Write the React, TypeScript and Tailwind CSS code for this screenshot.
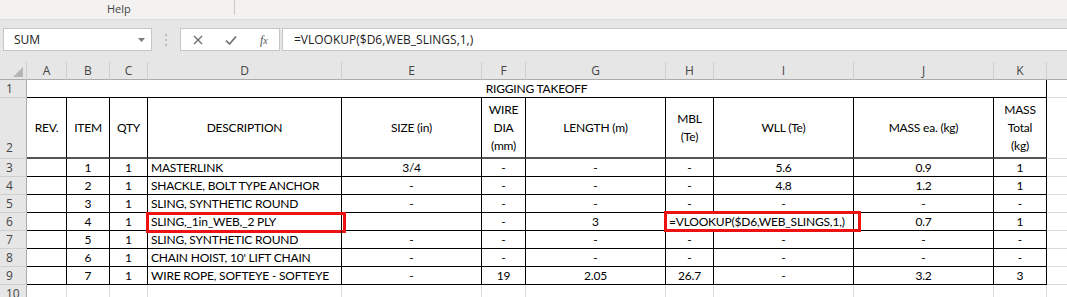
import clsx from "clsx";

const COLS = ["A", "B", "C", "D", "E", "F", "G", "H", "I", "J", "K"];

type Row = { item: string; desc: string; e: string; f: string; g: string; h: string; i: string; j: string; k: string };

const rows: Row[] = [
  { item: "1", desc: "MASTERLINK", e: "3/4", f: "-", g: "-", h: "-", i: "5.6", j: "0.9", k: "1" },
  { item: "2", desc: "SHACKLE, BOLT TYPE ANCHOR", e: "-", f: "-", g: "-", h: "-", i: "4.8", j: "1.2", k: "1" },
  { item: "3", desc: "SLING, SYNTHETIC ROUND", e: "-", f: "-", g: "-", h: "-", i: "-", j: "-", k: "-" },
  { item: "4", desc: "SLING,_1in_WEB,_2 PLY", e: "", f: "-", g: "3", h: "=VLOOKUP($D6,WEB_SLINGS,1,)", i: "", j: "0.7", k: "1" },
  { item: "5", desc: "SLING, SYNTHETIC ROUND", e: "-", f: "-", g: "-", h: "-", i: "-", j: "-", k: "-" },
  { item: "6", desc: "CHAIN HOIST, 10' LIFT CHAIN", e: "-", f: "-", g: "-", h: "-", i: "-", j: "-", k: "-" },
  { item: "7", desc: "WIRE ROPE, SOFTEYE - SOFTEYE", e: "-", f: "19", g: "2.05", h: "26.7", i: "-", j: "3.2", k: "3" },
];

const cellFont = { fontFamily: "Lato, 'Liberation Sans', sans-serif" };

function RowHead({ n, tall, last }: { n: string; tall?: boolean; last?: boolean }) {
  return (
    <div
      className={clsx(
        "flex border-r border-b border-r-[#ababab] border-b-[#d0d0d0] bg-[#e6e6e6] pl-[6px] text-[12px] text-[#444]",
        tall ? "h-[61px] items-end pb-[1px]" : "h-[18px] items-center",
        last && "border-b-0"
      )}
      style={{ fontFamily: "'Open Sans', 'Noto Sans', sans-serif" }}
    >
      {n}
    </div>
  );
}

function Cell({
  children,
  className,
  left,
}: {
  children?: React.ReactNode;
  className?: string;
  left?: boolean;
}) {
  return (
    <div
      className={clsx(
        "flex h-[18px] items-center whitespace-nowrap border-r border-b border-black text-[12px] leading-none tracking-[-0.2px] text-black",
        left ? "justify-start pl-[3px]" : "justify-center",
        className
      )}
    >
      {children}
    </div>
  );
}

function HeadCell({ lines, className }: { lines: string[]; className?: string }) {
  return (
    <div
      className={clsx(
        "flex h-[61px] flex-col items-center justify-center border-r border-b-2 border-r-black border-b-[#555] text-[12px] leading-[18px] tracking-[-0.2px] text-black",
        className
      )}
    >
      {lines.map((l) => (
        <span key={l}>{l}</span>
      ))}
    </div>
  );
}

export default function App() {
  return (
    <div className="h-[297px] w-[1067px] overflow-hidden bg-white" style={{ fontFamily: "'Open Sans', 'Noto Sans', sans-serif" }}>
      {/* ribbon tab strip */}
      <div className="flex h-[20px] items-center border-b border-[#dadada] bg-[#f3f2f1] text-[11px] text-[#444]">
        <span className="ml-[107px]">Help</span>
        <div className="ml-[103px] h-[15px] w-px self-start bg-[#c8c8c8]" />
      </div>

      {/* formula bar */}
      <div className="flex h-[42px] items-start bg-[#e6e6e6] pt-[8px]">
        <div className="ml-[3px] flex h-[23px] w-[149px] items-center justify-between border border-[#c6c6c6] bg-white pl-[10px] pr-[6px] text-[12px] text-[#222]">
          <span>SUM</span>
          <svg width="7" height="4" viewBox="0 0 7 4">
            <path d="M0 0h7L3.5 4z" fill="#7a7a7a" />
          </svg>
        </div>
        <div className="ml-[12px] flex h-[23px] w-[3px] flex-col items-center justify-center gap-[3px]">
          <span className="h-[2px] w-[2px] bg-[#bdbdbd]" />
          <span className="h-[2px] w-[2px] bg-[#bdbdbd]" />
          <span className="h-[2px] w-[2px] bg-[#bdbdbd]" />
        </div>
        <div className="ml-[13px] flex h-[23px] w-[100px] items-center border border-[#c6c6c6] bg-white">
          <svg className="ml-[12px]" width="10" height="10" viewBox="0 0 10 10">
            <path d="M1 1l8 8M9 1l-8 8" stroke="#6b6b6b" strokeWidth="1.3" />
          </svg>
          <svg className="ml-[22px]" width="12" height="10" viewBox="0 0 12 10">
            <path d="M1 5.5l3.5 3.5L11 1.5" stroke="#6b6b6b" strokeWidth="1.6" fill="none" />
          </svg>
          <span
            className="ml-[23px] text-[12px] italic text-[#555]"
            style={{ fontFamily: "'Liberation Serif', serif" }}
          >
            f<span className="text-[10px]">x</span>
          </span>
        </div>
        <div className="ml-[2px] flex h-[23px] flex-1 items-center border border-r-0 border-[#c6c6c6] bg-white pl-[11px] text-[12px] text-[#222]">
          =VLOOKUP($D6,WEB_SLINGS,1,)
        </div>
      </div>

      {/* sheet grid */}
      <div
        className="grid grid-cols-[27px_40px_43px_38px_194px_140px_44px_140px_48px_140px_140px_53px_20px]"
        style={cellFont}
      >
        {/* column headers */}
        <div className="relative h-[18px] border-r border-b border-r-[#cfcfcf] border-b-[#ababab] bg-[#e6e6e6]">
          <svg className="absolute bottom-[2px] right-[3px]" width="10" height="10" viewBox="0 0 10 10">
            <path d="M10 0V10H0z" fill="#b5b5b5" />
          </svg>
        </div>
        {COLS.map((c) => (
          <div
            key={c}
            className="flex h-[18px] items-center justify-center border-r border-b border-r-[#cfcfcf] border-b-[#ababab] bg-[#e6e6e6] text-[12px] text-[#444]"
            style={{ fontFamily: "'Open Sans', 'Noto Sans', sans-serif" }}
          >
            {c}
          </div>
        ))}
        <div className="h-[18px] border-b border-b-[#ababab] bg-[#e6e6e6]" />

        {/* row 1 */}
        <RowHead n="1" />
        <div className="col-span-11 flex h-[18px] items-center justify-center border-r border-b border-black text-[12px] tracking-[-0.2px] text-black">
          RIGGING TAKEOFF
        </div>
        <div className="h-[18px] border-b border-[#dadada]" />

        {/* row 2 */}
        <RowHead n="2" tall />
        <HeadCell lines={["REV."]} />
        <HeadCell lines={["ITEM"]} />
        <HeadCell lines={["QTY"]} />
        <HeadCell lines={["DESCRIPTION"]} />
        <HeadCell lines={["SIZE (in)"]} />
        <HeadCell lines={["WIRE", "DIA", "(mm)"]} />
        <HeadCell lines={["LENGTH (m)"]} />
        <HeadCell lines={["MBL", "(Te)"]} />
        <HeadCell lines={["WLL (Te)"]} />
        <HeadCell lines={["MASS ea. (kg)"]} />
        <HeadCell lines={["MASS", "Total", "(kg)"]} />
        <div className="h-[61px] border-b border-[#dadada]" />

        {/* data rows */}
        {rows.map((r, idx) => {
          const n = String(idx + 3);
          const flagged = r.item === "4";
          return [
            <RowHead key={`h${n}`} n={n} />,
            <Cell key={`a${n}`} />,
            <Cell key={`b${n}`}>{r.item}</Cell>,
            <Cell key={`c${n}`}>1</Cell>,
            <Cell key={`d${n}`} left className="relative">
              {r.desc}
              {flagged && (
                <div className="absolute -top-[1px] -bottom-[3px] -left-[2px] -right-[5px] border-[3px] border-[#ee1111]" />
              )}
            </Cell>,
            <Cell key={`e${n}`}>{r.e}</Cell>,
            <Cell key={`f${n}`}>{r.f}</Cell>,
            <Cell key={`g${n}`}>{r.g}</Cell>,
            flagged ? (
              <Cell key={`h${n}x`} left className="relative col-span-2 pl-[2px]">
                {r.h}
                <div className="absolute -top-[2px] -bottom-[2px] -left-[2px] -right-[8px] border-[3px] border-[#ee1111]" />
              </Cell>
            ) : (
              <Cell key={`h${n}x`}>{r.h}</Cell>
            ),
            flagged ? null : <Cell key={`i${n}`}>{r.i}</Cell>,
            <Cell key={`j${n}`}>{r.j}</Cell>,
            <Cell key={`k${n}`}>{r.k}</Cell>,
            <div key={`z${n}`} className="h-[18px] border-b border-[#dadada]" />,
          ];
        })}

        {/* row 10 */}
        <RowHead n="10" last />
        {COLS.map((c) => (
          <div key={`r10${c}`} className="h-[18px] border-r border-[#dadada]" />
        ))}
        <div className="h-[18px]" />
      </div>
    </div>
  );
}
